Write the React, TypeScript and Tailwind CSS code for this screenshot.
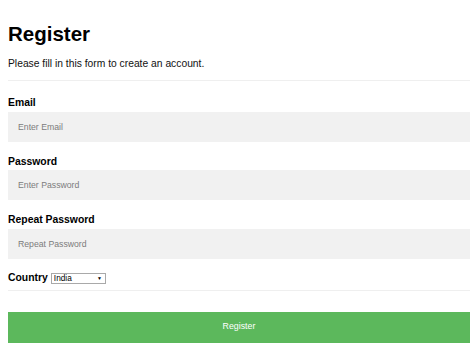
import React from 'react';

const fields = [
  { label: 'Email', placeholder: 'Enter Email', type: 'text' },
  { label: 'Password', placeholder: 'Enter Password', type: 'password' },
  { label: 'Repeat Password', placeholder: 'Repeat Password', type: 'password' },
];

export default function App() {
  return (
    <div className="min-h-[347px] bg-white pl-[8px] pr-[4px] text-black" style={{ fontFamily: '"Liberation Sans", Arial, sans-serif' }}>
      <h1 className="pt-[22px] text-[20.5px] font-bold leading-[23px]">Register</h1>
      <p className="mt-[13px] text-[10.3px] leading-[12px] text-[#111]">Please fill in this form to create an account.</p>
      <div className="mt-[10px] h-px bg-[#efefef]" />

      <div className="mt-[16px] flex flex-col">
        {fields.map((f, i) => (
          <div key={f.label} className={i > 0 ? 'mt-[14px]' : ''}>
            <label className="block text-[10.4px] font-bold leading-[12px]">{f.label}</label>
            <input
              type={f.type}
              placeholder={f.placeholder}
              className="mt-[2.5px] block h-[30px] w-full bg-[#f1f1f1] px-[10px] text-[8.7px] outline-none placeholder:text-[#7c7c7c]"
            />
          </div>
        ))}
      </div>

      <div className="mt-[13px] flex items-start gap-[3px]">
        <span className="text-[10.4px] font-bold leading-[12px]">Country</span>
        <div className="relative mt-[1px]">
          <select className="block h-[11px] w-[55px] appearance-none border border-[#a9a9a9] bg-white pl-[2px] text-[8.3px] leading-[9px] text-black outline-none">
            <option>India</option>
            <option>USA</option>
            <option>UK</option>
          </select>
          <span className="pointer-events-none absolute right-[4px] top-[2px] text-[5px] leading-[7px]">▼</span>
        </div>
      </div>
      <div className="mt-[6px] h-px bg-[#efefef]" />

      <button className="mt-[21px] block h-[31px] w-full bg-[#5cb85c] text-[8.8px] text-white">Register</button>
    </div>
  );
}
